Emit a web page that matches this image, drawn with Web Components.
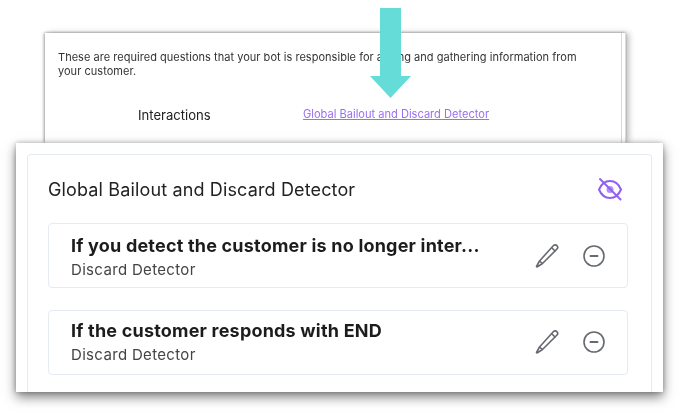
<!DOCTYPE html>
<html>
<head>
<meta charset="utf-8">
<style>
  html, body { margin: 0; height: 100%; background: #fff; overflow: hidden; }
  body { font-family: Inter, "Liberation Sans", sans-serif; color: #222; }
</style>
</head>
<body>
<callout-shot>
  <required-card></required-card>
  <detector-panel title-text="Global Bailout and Discard Detector">
    <question-row style="padding-top:1px; --text-top:2px" label="If you detect the customer is no longer inter..." kind="Discard Detector"></question-row>
    <question-row style="padding-bottom:2px" label="If the customer responds with END" kind="Discard Detector"></question-row>
  </detector-panel>
</callout-shot>
<script>
customElements.define('callout-shot', class extends HTMLElement {
  constructor() {
    super()
    this.attachShadow({mode: "open"})
    this.shadowRoot.innerHTML = `
      <style>
        :host { display: flex; flex-direction: column; position: relative; width: 680px; height: 417px; padding-top: 33px; box-sizing: border-box; filter: blur(.5px); }
        svg { position: absolute; left: 370px; top: 8px; z-index: 2; }
      </style>
      <slot></slot>
      <svg width="41" height="90" viewBox="0 0 41 90"><path d="M10 0h21v68h10L20.500 90 0 68h10z" fill="#66dcd9"/></svg>
    `
  }
})

customElements.define('required-card', class extends HTMLElement {
  constructor() {
    super()
    this.attachShadow({mode: "open"})
    this.shadowRoot.innerHTML = `
      <style>
        :host { display: block; box-sizing: border-box; width: 581px; height: 110px; margin-left: 45px; padding: 17px 30px 0 13px; background: #fff; border-right: 1px solid #ddd; box-shadow: -1px 0 3px rgba(0,0,0,.35), 3px 0 6px rgba(0,0,0,.25), 0 -1px 2px rgba(0,0,0,.08); position: relative; }
        :host::after { content: ""; position: absolute; top: 0; bottom: 0; right: 3px; width: 1px; background: #d9d9d9; }
        p { margin: 0; font-size: 11px; letter-spacing: .03px; line-height: 14px; color: #333; }
        .line { display: flex; margin-top: 27px; align-items: flex-start; }
        .name { font-size: 13.100px; line-height: 18px; color: #222; margin: 1px 0 0 80px; width: 165px; }
        a { font-size: 11.080px; line-height: 18px; color: #9a6ff2; text-decoration: underline; }
      </style>
      <p>These are required questions that your bot is responsible for asking and gathering information from your customer.</p>
      <div class="line"><span class="name">Interactions</span><a>Global Bailout and Discard Detector</a></div>
    `
  }
})

customElements.define('detector-panel', class extends HTMLElement {
  constructor() {
    super()
    this.attachShadow({mode: "open"})
    this.shadowRoot.innerHTML = `
      <style>
        :host { display: block; box-sizing: border-box; width: 647px; height: 249px; margin-left: 16px; padding: 11px 11px 0; background: #fff; box-shadow: 0 5px 11px rgba(0,0,0,.5), 0 0 5px rgba(0,0,0,.25); position: relative; z-index: 1; }
        .inner { box-sizing: border-box; height: 238px; border: 1px solid #e6ebf3; border-bottom: 0; border-radius: 4px 4px 0 0; padding: 0 23px 0 20px; }
        header { display: flex; align-items: center; justify-content: space-between; height: 68px; padding-right: 5px; }
        h2 { margin: 0; font-size: 18px; letter-spacing: .14px; font-weight: 400; color: #222; }
        .rows { display: flex; flex-direction: column; gap: 22px; }
      </style>
      <div class="inner">
        <header>
          <h2>${this.getAttribute('title-text')}</h2>
          <svg width="26" height="24" viewBox="0 0 26 24" fill="none" stroke="#9061f0" stroke-width="2" stroke-linecap="round">
            <path d="M2 12.500C4.500 6.500 9 4 13 4s8.500 2.500 11 8.500c-2.500 6-7 8.500-11 8.500S4.500 18.500 2 12.500z"/>
            <circle cx="13" cy="12.500" r="3.500" fill="#9061f0" stroke="none" opacity=".7"/>
            <path d="M3 2 23.500 22.500"/>
          </svg>
        </header>
        <div class="rows"><slot></slot></div>
      </div>
    `
  }
})

customElements.define('question-row', class extends HTMLElement {
  constructor() {
    super()
    this.attachShadow({mode: "open"})
    this.shadowRoot.innerHTML = `
      <style>
        :host { display: flex; box-sizing: border-box; height: 65px; align-items: center; border: 1px solid #e6ebf3; border-radius: 4px; padding: 0 22px 0 22px; }
        .text { flex: 1; display: flex; flex-direction: column; gap: 5px; margin-top: var(--text-top, 1px); }
        b { font-size: 18px; letter-spacing: .2px; line-height: 20px; font-weight: 700; color: #1c1c1c; }
        span { font-size: 15px; letter-spacing: .33px; line-height: 18px; color: #444; }
        .tools { display: flex; align-items: center; gap: 23px; }
      </style>
      <div class="text"><b>${this.getAttribute('label')}</b><span>${this.getAttribute('kind')}</span></div>
      <div class="tools">
        <svg width="26" height="26" viewBox="0 0 26 26" fill="none" stroke="#666a70" stroke-width="1.600" stroke-linejoin="round">
          <path d="M19.500 2.500c1-1 2.500-.8 3.400.1s1.100 2.400.1 3.400L8.500 20.500 3 24l-.5-.5 3-5.500z"/>
          <path d="M17.500 4.500l4 4M5.500 18l3 2.500"/>
        </svg>
        <svg width="22" height="22" viewBox="0 0 22 22" fill="none" stroke="#666a70" stroke-linecap="round">
          <circle cx="11" cy="11" r="10" stroke-width="1.600"/>
          <path d="M7.500 11h7" stroke-width="2"/>
        </svg>
      </div>
    `
  }
})
</script>
</body>
</html>
